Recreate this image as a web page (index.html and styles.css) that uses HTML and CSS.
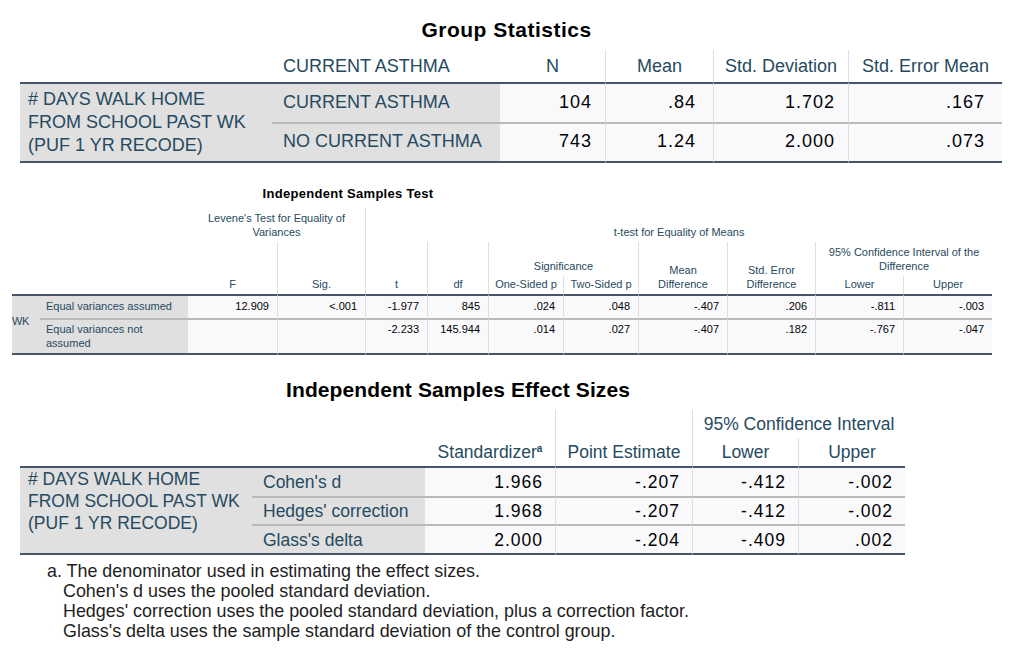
FILE: index.html
```html
<!DOCTYPE html>
<html>
<head>
<meta charset="utf-8">
<title>SPSS Output</title>
<link rel="stylesheet" href="styles.css">
</head>
<body>
<section class="gs">
  <div class="title gs-title">Group Statistics</div>
  <table class="tbl gs-tbl">
    <colgroup>
      <col class="g1"><col class="g2"><col class="g3"><col class="g4"><col class="g5"><col class="g6">
    </colgroup>
    <thead>
      <tr class="gs-h">
        <th class="corner"></th>
        <th class="hl">CURRENT ASTHMA</th>
        <th>N</th>
        <th class="vl">Mean</th>
        <th class="vl">Std. Deviation</th>
        <th class="vl">Std. Error Mean</th>
      </tr>
    </thead>
    <tbody>
      <tr class="gs-r1">
        <td class="lab rowlab top bot" rowspan="2"># DAYS WALK HOME<br>FROM SCHOOL PAST WK<br>(PUF 1 YR RECODE)</td>
        <td class="lab sub top">CURRENT ASTHMA</td>
        <td class="num top p14">104</td>
        <td class="num top vl p17">.84</td>
        <td class="num top vl p14">1.702</td>
        <td class="num top vl p17">.167</td>
      </tr>
      <tr class="gs-r2">
        <td class="lab sub sep bot">NO CURRENT ASTHMA</td>
        <td class="num sep bot p14">743</td>
        <td class="num sep bot vl p17">1.24</td>
        <td class="num sep bot vl p14">2.000</td>
        <td class="num sep bot vl p17">.073</td>
      </tr>
    </tbody>
  </table>
</section>

<section class="ist">
  <div class="title ist-title">Independent Samples Test</div>
  <table class="tbl ist-tbl">
    <colgroup>
      <col class="t1"><col class="t2"><col class="t3"><col class="t4"><col class="t5"><col class="t6">
      <col class="t7"><col class="t8"><col class="t9"><col class="t10"><col class="t11"><col class="t12">
    </colgroup>
    <thead>
      <tr class="ist-ha">
        <th class="corner" colspan="2" rowspan="3"></th>
        <th colspan="2">Levene's Test for Equality of<br>Variances</th>
        <th class="vl" colspan="8">t-test for Equality of Means</th>
      </tr>
      <tr class="ist-hb">
        <th rowspan="2">F</th>
        <th class="vl" rowspan="2">Sig.</th>
        <th class="vl" rowspan="2">t</th>
        <th class="vl" rowspan="2">df</th>
        <th class="vl" colspan="2">Significance</th>
        <th class="vl" rowspan="2">Mean<br>Difference</th>
        <th class="vl" rowspan="2">Std. Error<br>Difference</th>
        <th class="vl" colspan="2">95% Confidence Interval of the<br>Difference</th>
      </tr>
      <tr class="ist-hc">
        <th class="vl">One-Sided p</th>
        <th class="vl">Two-Sided p</th>
        <th class="vl">Lower</th>
        <th class="vl">Upper</th>
      </tr>
    </thead>
    <tbody>
      <tr class="ist-r1">
        <td class="lab clip top bot" rowspan="2">WK</td>
        <td class="lab sub top">Equal variances assumed</td>
        <td class="num top">12.909</td>
        <td class="num top vl">&lt;.001</td>
        <td class="num top vl">-1.977</td>
        <td class="num top vl">845</td>
        <td class="num top vl">.024</td>
        <td class="num top vl">.048</td>
        <td class="num top vl">-.407</td>
        <td class="num top vl">.206</td>
        <td class="num top vl">-.811</td>
        <td class="num top vl">-.003</td>
      </tr>
      <tr class="ist-r2">
        <td class="lab sub sep bot">Equal variances not<br>assumed</td>
        <td class="num sep bot"></td>
        <td class="num sep bot vl"></td>
        <td class="num sep bot vl">-2.233</td>
        <td class="num sep bot vl">145.944</td>
        <td class="num sep bot vl">.014</td>
        <td class="num sep bot vl">.027</td>
        <td class="num sep bot vl">-.407</td>
        <td class="num sep bot vl">.182</td>
        <td class="num sep bot vl">-.767</td>
        <td class="num sep bot vl">-.047</td>
      </tr>
    </tbody>
  </table>
</section>

<section class="es">
  <div class="title es-title">Independent Samples Effect Sizes</div>
  <table class="tbl es-tbl">
    <colgroup>
      <col class="e1"><col class="e2"><col class="e3"><col class="e4"><col class="e5"><col class="e6">
    </colgroup>
    <thead>
      <tr class="es-ha">
        <th class="corner" colspan="2" rowspan="2"></th>
        <th rowspan="2">Standardizer<sup>a</sup></th>
        <th class="vl" rowspan="2">Point Estimate</th>
        <th class="vl" colspan="2">95% Confidence Interval</th>
      </tr>
      <tr class="es-hb">
        <th class="vl">Lower</th>
        <th class="vl">Upper</th>
      </tr>
    </thead>
    <tbody>
      <tr class="es-r1">
        <td class="lab rowlab top bot" rowspan="3"># DAYS WALK HOME<br>FROM SCHOOL PAST WK<br>(PUF 1 YR RECODE)</td>
        <td class="lab sub top">Cohen's d</td>
        <td class="num top">1.966</td>
        <td class="num top vl">-.207</td>
        <td class="num top vl">-.412</td>
        <td class="num top vl">-.002</td>
      </tr>
      <tr class="es-r2">
        <td class="lab sub sep">Hedges' correction</td>
        <td class="num sep">1.968</td>
        <td class="num sep vl">-.207</td>
        <td class="num sep vl">-.412</td>
        <td class="num sep vl">-.002</td>
      </tr>
      <tr class="es-r3">
        <td class="lab sub sep bot">Glass's delta</td>
        <td class="num sep bot">2.000</td>
        <td class="num sep bot vl">-.204</td>
        <td class="num sep bot vl">-.409</td>
        <td class="num sep bot vl">.002</td>
      </tr>
    </tbody>
  </table>
  <div class="foot">
    <p class="foot-first">a. The denominator used in estimating the effect sizes.</p>
    <p>Cohen's d uses the pooled standard deviation.</p>
    <p>Hedges' correction uses the pooled standard deviation, plus a correction factor.</p>
    <p>Glass's delta uses the sample standard deviation of the control group.</p>
  </div>
</section>
</body>
</html>
```

FILE: styles.css
```css
* { box-sizing: border-box; margin: 0; padding: 0; }

html, body {
  width: 1013px;
  height: 660px;
  background: #ffffff;
  overflow: hidden;
}

body {
  font-family: "Liberation Sans", Arial, sans-serif;
  color: #010205;
}

.title {
  font-weight: bold;
  color: #000000;
  white-space: nowrap;
  text-align: center;
}

/* generic table */
.tbl {
  border-collapse: separate;
  border-spacing: 0;
  table-layout: fixed;
}

.tbl th {
  font-weight: normal;
  color: #264a60;
  text-align: center;
  vertical-align: bottom;
  white-space: nowrap;
}

.tbl td { white-space: nowrap; }

.tbl .corner { background: transparent; }

.tbl th.vl,
.tbl td.vl { border-left: 1px solid #dedede; }

.lab {
  background: #e0e0e0;
  color: #264a60;
  text-align: left;
}

.num {
  background: #f9f9fb;
  text-align: right;
}

.top { border-top: 2px solid #45566a; }
.sep { border-top: 2px solid #b9b9b9; }
.bot { border-bottom: 2px solid #45566a; }

/* ---------- Group Statistics ---------- */
.gs { padding-top: 18px; }

.gs-title {
  width: 1013px;
  font-size: 21px;
  line-height: 24px;
  letter-spacing: 0.5px;
}

.gs-tbl {
  margin: 8px 0 0 20px;
  width: 982px;
  font-size: 18px;
}

.g1 { width: 252px; }
.g2 { width: 228px; }
.g3 { width: 105px; }
.g4 { width: 108px; }
.g5 { width: 135px; }
.g6 { width: 154px; }

.gs-h { height: 32px; }
.gs-h th { line-height: 22px; padding-bottom: 5px; }
.gs-h th.hl { text-align: left; padding-left: 11px; }

.gs-r1 { height: 40px; }
.gs-r2 { height: 41px; }

.gs-tbl td { vertical-align: middle; line-height: 22px; }
.gs-r1 td.sub, .gs-r1 td.num,
.gs-r2 td.sub, .gs-r2 td.num { padding-bottom: 3px; }
.gs-tbl .rowlab { padding-left: 8px; line-height: 23.3px; }
.gs-tbl .sub { padding-left: 11px; }
.gs-tbl .num { letter-spacing: 1px; }
.gs-tbl .p14 { padding-right: 13px; }
.gs-tbl .p17 { padding-right: 17px; }

/* ---------- Independent Samples Test ---------- */
.ist { padding-top: 23px; }

.ist-title {
  width: 696px;
  font-size: 13px;
  line-height: 16px;
  letter-spacing: 0.3px;
}

.ist-tbl {
  margin: 6px 0 0 12px;
  width: 980px;
  font-size: 11px;
}

.t1 { width: 28px; }
.t2 { width: 148px; }
.t3 { width: 89px; }
.t4 { width: 88px; }
.t5 { width: 62px; }
.t6 { width: 61px; }
.t7 { width: 75px; }
.t8 { width: 75px; }
.t9 { width: 89px; }
.t10 { width: 88px; }
.t11 { width: 88px; }
.t12 { width: 89px; }

.ist-tbl th { line-height: 14px; padding-bottom: 3px; }
.ist-ha { height: 34px; }
.ist-hb { height: 34px; }
.ist-hc { height: 18px; }

.ist-r1 { height: 24px; }
.ist-r2 { height: 37px; }

.ist-tbl td {
  vertical-align: top;
  line-height: 14px;
  padding-top: 3px;
}
.ist-r2 td { padding-top: 2px; }
.ist-tbl .sub { padding-left: 6px; }
.ist-tbl .num { padding-right: 8px; }

.ist-tbl td.clip {
  vertical-align: middle;
  padding: 0 0 8px 0;
  letter-spacing: -0.5px;
}

/* ---------- Effect Sizes ---------- */
.es { padding-top: 23px; }

.es-title {
  width: 916px;
  font-size: 21px;
  line-height: 24px;
  letter-spacing: 0.1px;
}

.es-tbl {
  margin: 8px 0 0 20px;
  width: 885px;
  font-size: 17.5px;
}

.e1 { width: 232px; }
.e2 { width: 173px; }
.e3 { width: 130px; }
.e4 { width: 137px; }
.e5 { width: 106px; }
.e6 { width: 107px; }

.es-ha { height: 28px; }
.es-hb { height: 28px; }
.es-tbl th { line-height: 20px; padding-bottom: 4px; }
.es-tbl sup {
  font-size: 10px;
  font-weight: bold;
  vertical-align: 6px;
  line-height: 0;
}

.es-r1 { height: 30px; }
.es-r2 { height: 28px; }
.es-r3 { height: 31px; }

.es-tbl td { vertical-align: middle; line-height: 22px; }
.es-tbl .rowlab {
  vertical-align: top;
  padding-left: 8px;
  padding-top: 0;
  line-height: 22px;
}
.es-tbl .sub { padding-left: 11px; }
.es-tbl .num { letter-spacing: 1px; padding-right: 12px; }

/* footnote */
.foot {
  margin-top: 6px;
  font-size: 17.9px;
  line-height: 20px;
  color: #1e1e1e;
  padding-left: 63px;
  white-space: nowrap;
}

.foot-first { text-indent: -16px; }
```
